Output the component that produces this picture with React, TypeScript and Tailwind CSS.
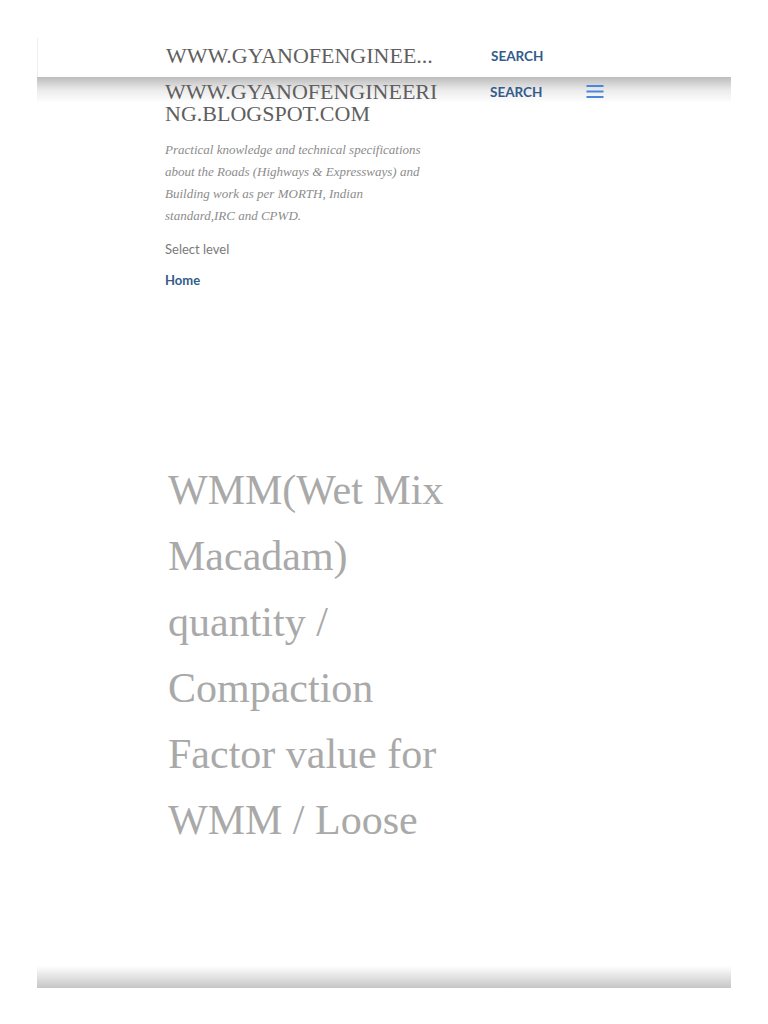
import React from 'react';

const serif = "font-['Liberation_Serif','DejaVu_Serif',serif]";
const sans = "font-['Lato','Liberation_Sans',sans-serif]";

const MenuIcon: React.FC = () => (
  <svg width="18" height="14" viewBox="0 0 18 14" className="text-[#4a86d9]">
    <line x1="0.5" y1="2" x2="17.5" y2="2" stroke="currentColor" strokeWidth="2" />
    <line x1="0.5" y1="7.5" x2="17.5" y2="7.5" stroke="currentColor" strokeWidth="2" />
    <line x1="0.5" y1="13" x2="17.5" y2="13" stroke="currentColor" strokeWidth="2" />
  </svg>
);

const App: React.FC = () => {
  return (
    <div className="min-h-[1024px] w-full bg-white pt-[38px] px-[37px]">
      <div className="relative h-[950px] flex flex-col bg-white">
        {/* sticky header */}
        <div className="h-[39px] flex items-center pl-[128px] pb-[3px] bg-white border-l border-[#eeeeee]">
          <div className={`w-[280px] whitespace-nowrap text-[22px] leading-[22px] text-[#5f5f5f] ${serif}`}>
            WWW.GYANOFENGINEE...
          </div>
          <span className={`ml-[45px] text-[13.5px] leading-[20px] font-bold text-[#335b8c] ${sans}`}>SEARCH</span>
        </div>

        <div className="relative flex-1 flex flex-col">
          <div className="absolute top-0 left-0 right-0 h-[26px] bg-gradient-to-b from-[#bcbcbc] via-[#ebebeb] to-transparent" />

          <div className="relative z-10 pl-[128px] pt-[4px] flex flex-col">
            <div className="flex items-start">
              <div className={`w-[280px] break-all text-[22px] leading-[21.5px] text-[#5f5f5f] ${serif}`}>
                WWW.GYANOFENGINEERING.BLOGSPOT.COM
              </div>
              <span className={`ml-[45px] mt-[1px] text-[13.5px] leading-[20px] font-bold text-[#335b8c] ${sans}`}>SEARCH</span>
              <span className="ml-[44px] mt-[3px]">
                <MenuIcon />
              </span>
            </div>

            <p className={`mt-[15px] w-[262px] italic text-[13px] leading-[22px] text-[#8c8c8c] ${serif}`}>
              Practical knowledge and technical specifications about the Roads (Highways &amp; Expressways) and Building work as per MORTH, Indian standard,IRC and CPWD.
            </p>

            <div className={`mt-[12px] text-[13px] leading-[20px] text-[#7a7a7a] ${sans}`}>Select level</div>
            <div className={`mt-[11px] text-[13px] leading-[20px] font-bold text-[#335b8c] ${sans}`}>Home</div>

            <h1 className={`mt-[167px] ml-[3px] w-[300px] text-[42px] leading-[66px] font-normal text-[#a9a9a9] ${serif}`}>
              WMM(Wet Mix Macadam) quantity / Compaction Factor value for WMM / Loose
            </h1>
          </div>

          <div className="mt-auto h-[22px] bg-gradient-to-b from-white to-[#c6c6c6]" />
        </div>
      </div>
    </div>
  );
};

export default App;
